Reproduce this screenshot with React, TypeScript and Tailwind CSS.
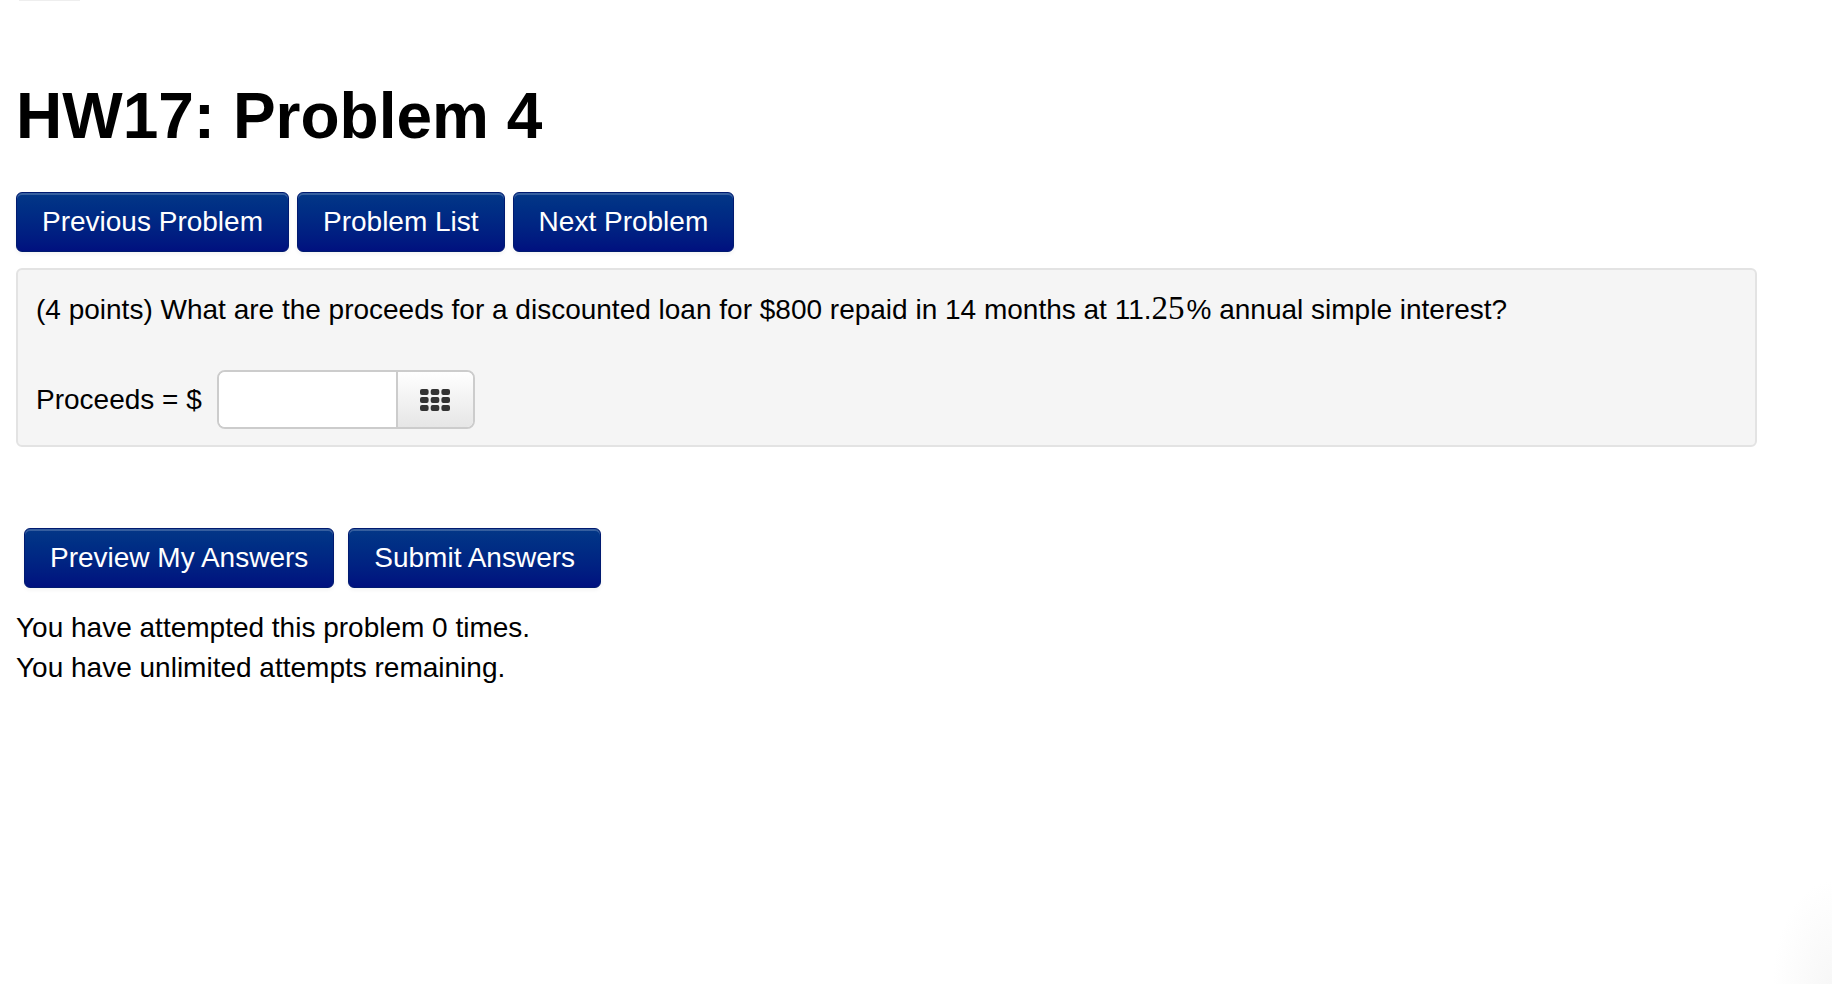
const sans = "font-['Liberation_Sans',Arial,sans-serif]";

function NavButton({ children, className = "" }: { children: React.ReactNode; className?: string }) {
  return (
    <button
      type="button"
      className={`h-[60px] rounded-[6px] border border-[#001a70] bg-gradient-to-b from-[#043787] to-[#00107f] px-[25px] text-[28px] leading-[40px] text-white shadow-[inset_0_2px_0_rgba(255,255,255,0.2),0_2px_4px_rgba(0,0,0,0.05)] ${className}`}
    >
      {children}
    </button>
  );
}

export default function App() {
  return (
    <div className={`relative min-h-[984px] overflow-hidden bg-white pl-4 pr-[75px] text-[28px] leading-[40px] text-black ${sans}`}>
      <div className="pointer-events-none absolute left-[19px] top-0 h-px w-[61px] bg-[#eeeeee]" />
      <div className="pointer-events-none absolute bottom-0 right-0 h-[104px] w-[60px] bg-[radial-gradient(ellipse_at_bottom_right,#f7f7f7,#ffffff_70%)]" />

      <h1 className="pt-[76px] text-[64px] font-bold leading-[80px]">HW17: Problem 4</h1>

      <div className="mt-9 flex gap-2">
        <NavButton>Previous Problem</NavButton>
        <NavButton>Problem List</NavButton>
        <NavButton>Next Problem</NavButton>
      </div>

      <div className="mt-4 h-[179px] rounded-[6px] border-2 border-[#e3e3e3] bg-[#f5f5f5] px-[18px] pt-[18px]">
        <p className="whitespace-nowrap">
          (4 points) What are the proceeds for a discounted loan for $800 repaid in 14 months at 11.
          <span className="font-['Liberation_Serif',serif] text-[33px]">25</span>
          <span className="ml-[2px]">%</span> annual simple interest?
        </p>
        <div className="mt-[40px] flex items-center">
          <span>Proceeds = $</span>
          <div className="ml-[15px] flex h-[59px] w-[258px] overflow-hidden rounded-[8px] border-2 border-[#cccccc] bg-white">
            <input type="text" aria-label="Proceeds" className="h-full w-[177px] bg-white outline-none" />
            <div className="flex flex-1 items-center justify-center border-l-2 border-[#cccccc] bg-gradient-to-b from-white to-[#e6e6e6]">
              <svg width="30" height="22" viewBox="0 0 30 22" fill="#333333" aria-hidden="true">
                <rect x="0" y="0" width="8.6" height="6" rx="2" />
                <rect x="10.7" y="0" width="8.6" height="6" rx="2" />
                <rect x="21.4" y="0" width="8.6" height="6" rx="2" />
                <rect x="0" y="8" width="8.6" height="6" rx="2" />
                <rect x="10.7" y="8" width="8.6" height="6" rx="2" />
                <rect x="21.4" y="8" width="8.6" height="6" rx="2" />
                <rect x="0" y="16" width="8.6" height="6" rx="2" />
                <rect x="10.7" y="16" width="8.6" height="6" rx="2" />
                <rect x="21.4" y="16" width="8.6" height="6" rx="2" />
              </svg>
            </div>
          </div>
        </div>
      </div>

      <div className="mt-[81px] flex gap-[14px] pl-2">
        <NavButton>Preview My Answers</NavButton>
        <NavButton>Submit Answers</NavButton>
      </div>

      <div className="mt-5">
        <p>You have attempted this problem 0 times.</p>
        <p>You have unlimited attempts remaining.</p>
      </div>
    </div>
  );
}
